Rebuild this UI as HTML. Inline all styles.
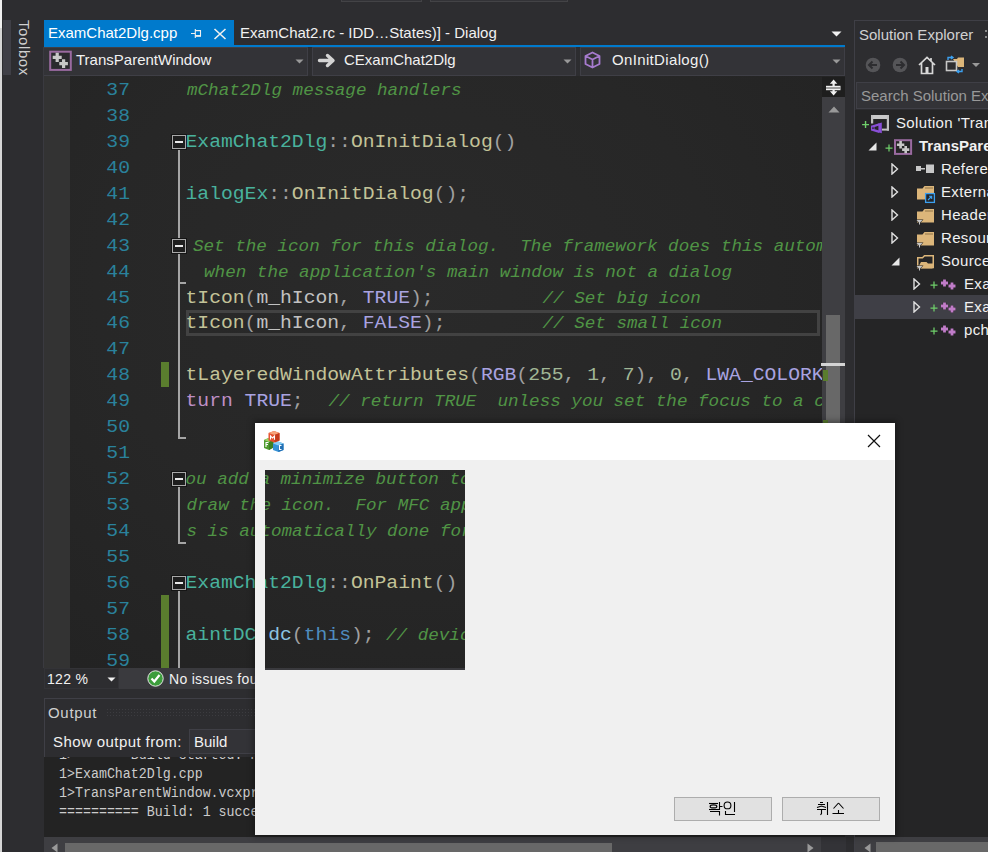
<!DOCTYPE html><html><head><meta charset="utf-8"><style>
*{margin:0;padding:0;box-sizing:border-box}
html,body{width:988px;height:852px;overflow:hidden;background:#2d2d30;position:relative;font-family:"Liberation Sans",sans-serif}
.a{position:absolute}
.cl{position:absolute;white-space:pre;font-family:"Liberation Mono",monospace;font-size:19.7px;line-height:26px;height:26px;transform-origin:0 18.2px;transform:scaleY(0.9)}
.ui{position:absolute;white-space:pre;font-family:"Liberation Sans",sans-serif;color:#f1f1f1}
</style></head><body>

<div class="a" style="left:0;top:0;width:2px;height:28px;background:#f0f0f0"></div>
<div class="a" style="left:0;top:28px;width:2px;height:824px;background:#d6d6d6"></div>
<div class="a" style="left:3px;top:20px;width:8px;height:55px;background:#3f3f46"></div>
<div class="ui" style="left:32px;top:20px;font-size:15px;line-height:16px;letter-spacing:0.6px;transform-origin:0 0;transform:rotate(90deg);color:#d0d0d0">Toolbox</div>
<div class="a" style="left:341px;top:-20px;width:81px;height:22px;background:#333337;border:1px solid #434346"></div>
<div class="a" style="left:430px;top:-20px;width:138px;height:22px;background:#333337;border:1px solid #434346"></div>
<div class="a" style="left:44px;top:20px;width:190px;height:25px;background:#007acc"></div>
<div class="ui" style="left:48px;top:24px;font-size:15px;line-height:18px;color:#fff">ExamChat2Dlg.cpp</div>
<svg class="a" style="left:190px;top:26px" width="13" height="14" viewBox="0 0 13 14">
<path d="M1 7.5H5M5.3 3V12M5.5 4.6H10.5V10M5.5 9.6H11" stroke="#f0f0f0" stroke-width="1.1" fill="none"/><path d="M5.5 10H11" stroke="#f0f0f0" stroke-width="1.6"/></svg>
<svg class="a" style="left:213px;top:28px" width="14" height="12" viewBox="0 0 14 12">
<path d="M1.5 1L12.5 11M12.5 1L1.5 11" stroke="#f0f0f0" stroke-width="1.6" fill="none"/></svg>
<div class="ui" style="left:240px;top:24px;font-size:15px;line-height:18px;color:#f1f1f1">ExamChat2.rc - IDD…States)] - Dialog</div>
<svg class="a" style="left:831px;top:31px" width="11" height="7" viewBox="0 0 11 7"><path d="M0.5 0.5H10.5L5.5 5.5Z" fill="#f1f1f1"/></svg>
<div class="a" style="left:44px;top:45px;width:801px;height:2px;background:#007acc"></div>
<div class="a" style="left:44px;top:47px;width:801px;height:29px;background:#2d2d30"></div>
<div class="a" style="left:43px;top:47px;width:265px;height:29px;background:#333337;border:1px solid #3f3f46"></div>
<div class="a" style="left:312px;top:47px;width:264px;height:29px;background:#333337;border:1px solid #3f3f46"></div>
<div class="a" style="left:580px;top:47px;width:265px;height:29px;background:#333337;border:1px solid #3f3f46"></div>
<svg class="a" style="left:295px;top:59px" width="9" height="6" viewBox="0 0 9 6"><path d="M0.5 0.5H8.5L4.5 4.5Z" fill="#999"/></svg>
<svg class="a" style="left:563px;top:59px" width="9" height="6" viewBox="0 0 9 6"><path d="M0.5 0.5H8.5L4.5 4.5Z" fill="#999"/></svg>
<svg class="a" style="left:832px;top:59px" width="9" height="6" viewBox="0 0 9 6"><path d="M0.5 0.5H8.5L4.5 4.5Z" fill="#999"/></svg>
<svg class="a" style="left:49px;top:50px" width="23" height="21" viewBox="0 0 23 21">
<rect x="1.2" y="1.7" width="20.6" height="18.2" fill="#2a2a2e" stroke="#9a6aa0" stroke-width="2"/>
<path d="M3.7 7.4H12.7M8.2 2.7V12.1M10.3 13.6H18.9M14.6 9.3V17.9" stroke="#c8c8c8" stroke-width="3.2"/></svg>
<div class="ui" style="left:76px;top:51px;font-size:15px;line-height:18px;color:#f1f1f1">TransParentWindow</div>
<svg class="a" style="left:317px;top:52px" width="21" height="17" viewBox="0 0 21 17">
<path d="M2.5 8.5H15.5M10.5 3.5L16 8.5L10.5 13.5" stroke="#d4d4d4" stroke-width="3.4" stroke-linecap="round" stroke-linejoin="round" fill="none"/></svg>
<div class="ui" style="left:344px;top:51px;font-size:15px;line-height:18px;color:#f1f1f1">CExamChat2Dlg</div>
<svg class="a" style="left:584px;top:51px" width="17" height="18" viewBox="0 0 17 18">
<path d="M8.5 1.5L15.5 5V13L8.5 16.5L1.5 13V5Z M1.5 5L8.5 8.5L15.5 5 M8.5 8.5V16.5" stroke="#a77bcf" stroke-width="1.8" stroke-linejoin="round" fill="none"/></svg>
<div class="ui" style="left:612px;top:51px;font-size:15px;line-height:18px;letter-spacing:0.35px;color:#f1f1f1">OnInitDialog()</div>
<div class="a" style="left:43px;top:47px;width:1px;height:621px;background:#3a3a40"></div>
<div class="a" style="left:44px;top:76px;width:801px;height:592px;background:radial-gradient(ellipse 70% 80% at 45% 35%, #2a2a2a 0%, #272727 55%, #232323 100%);overflow:hidden">
<div class="a" style="left:0;top:0;width:26px;height:592px;background:#333333"></div>
</div>
<div class="a" style="left:44px;top:76px;width:778px;height:592px;overflow:hidden">
<div class="cl" style="left:16px;width:70px;text-align:right;top:0.91px;color:#2a829c">37</div>
<div class="cl" style="left:16px;width:70px;text-align:right;top:26.86px;color:#2a829c">38</div>
<div class="cl" style="left:16px;width:70px;text-align:right;top:52.81px;color:#2a829c">39</div>
<div class="cl" style="left:16px;width:70px;text-align:right;top:78.76px;color:#2a829c">40</div>
<div class="cl" style="left:16px;width:70px;text-align:right;top:104.71px;color:#2a829c">41</div>
<div class="cl" style="left:16px;width:70px;text-align:right;top:130.66px;color:#2a829c">42</div>
<div class="cl" style="left:16px;width:70px;text-align:right;top:156.61px;color:#2a829c">43</div>
<div class="cl" style="left:16px;width:70px;text-align:right;top:182.56px;color:#2a829c">44</div>
<div class="cl" style="left:16px;width:70px;text-align:right;top:208.51px;color:#2a829c">45</div>
<div class="cl" style="left:16px;width:70px;text-align:right;top:234.46px;color:#2a829c">46</div>
<div class="cl" style="left:16px;width:70px;text-align:right;top:260.41px;color:#2a829c">47</div>
<div class="cl" style="left:16px;width:70px;text-align:right;top:286.36px;color:#2a829c">48</div>
<div class="cl" style="left:16px;width:70px;text-align:right;top:312.31px;color:#2a829c">49</div>
<div class="cl" style="left:16px;width:70px;text-align:right;top:338.26px;color:#2a829c">50</div>
<div class="cl" style="left:16px;width:70px;text-align:right;top:364.21px;color:#2a829c">51</div>
<div class="cl" style="left:16px;width:70px;text-align:right;top:390.16px;color:#2a829c">52</div>
<div class="cl" style="left:16px;width:70px;text-align:right;top:416.11px;color:#2a829c">53</div>
<div class="cl" style="left:16px;width:70px;text-align:right;top:442.06px;color:#2a829c">54</div>
<div class="cl" style="left:16px;width:70px;text-align:right;top:468.01px;color:#2a829c">55</div>
<div class="cl" style="left:16px;width:70px;text-align:right;top:493.96px;color:#2a829c">56</div>
<div class="cl" style="left:16px;width:70px;text-align:right;top:519.91px;color:#2a829c">57</div>
<div class="cl" style="left:16px;width:70px;text-align:right;top:545.86px;color:#2a829c">58</div>
<div class="cl" style="left:16px;width:70px;text-align:right;top:571.81px;color:#2a829c">59</div>
<div class="a" style="left:117px;top:286px;width:8px;height:25px;background:#5a7d2e"></div>
<div class="a" style="left:117px;top:519px;width:8px;height:80px;background:#5a7d2e"></div>
<div class="a" style="left:134px;top:73px;width:2px;height:290px;background:#a5a5a5"></div>
<div class="a" style="left:134px;top:361px;width:8px;height:2px;background:#a5a5a5"></div>
<div class="a" style="left:134px;top:175px;width:2px;height:33px;background:#a5a5a5"></div>
<div class="a" style="left:134px;top:206px;width:8px;height:2px;background:#a5a5a5"></div>
<div class="a" style="left:134px;top:396px;width:2px;height:72px;background:#a5a5a5"></div>
<div class="a" style="left:134px;top:466px;width:8px;height:2px;background:#a5a5a5"></div>
<div class="a" style="left:134px;top:513px;width:2px;height:111px;background:#a5a5a5"></div>
<div class="a" style="left:127px;top:58px;width:16px;height:16px;background:#151515"></div>
<div class="a" style="left:128px;top:59px;width:14px;height:14px;border:1.5px solid #a8a8a8;background:#1e1e1e"></div>
<div class="a" style="left:131px;top:65px;width:8px;height:2px;background:#e8e8e8"></div>
<div class="a" style="left:127px;top:162px;width:16px;height:16px;background:#151515"></div>
<div class="a" style="left:128px;top:163px;width:14px;height:14px;border:1.5px solid #a8a8a8;background:#1e1e1e"></div>
<div class="a" style="left:131px;top:169px;width:8px;height:2px;background:#e8e8e8"></div>
<div class="a" style="left:127px;top:395px;width:16px;height:16px;background:#151515"></div>
<div class="a" style="left:128px;top:396px;width:14px;height:14px;border:1.5px solid #a8a8a8;background:#1e1e1e"></div>
<div class="a" style="left:131px;top:402px;width:8px;height:2px;background:#e8e8e8"></div>
<div class="a" style="left:127px;top:499px;width:16px;height:16px;background:#151515"></div>
<div class="a" style="left:128px;top:500px;width:14px;height:14px;border:1.5px solid #a8a8a8;background:#1e1e1e"></div>
<div class="a" style="left:131px;top:506px;width:8px;height:2px;background:#e8e8e8"></div>
<div class="a" style="left:142px;top:234px;width:634px;height:26px;border:3px solid #424242"></div>
<div class="cl" style="left:143.00px;top:0.91px"><span style="color:#509445;font-style:italic;font-size:17.6px">mChat2Dlg message handlers</span></div>
<div class="cl" style="left:141.50px;top:52.81px"><span style="color:#49b29d">ExamChat2Dlg</span><span style="color:#a0a0a0">::</span><span style="color:#c3c398">OnInitDialog</span><span style="color:#a0a0a0">()</span></div>
<div class="cl" style="left:141.50px;top:104.71px"><span style="color:#49b29d">ialogEx</span><span style="color:#a0a0a0">::</span><span style="color:#c3c398">OnInitDialog</span><span style="color:#a0a0a0">();</span></div>
<div class="cl" style="left:149.00px;top:156.61px"><span style="color:#509445;font-style:italic;font-size:17.6px">Set the icon for this dialog.  The framework does this automatically</span></div>
<div class="cl" style="left:149.50px;top:182.56px"><span style="color:#509445;font-style:italic;font-size:17.6px"> when the application&#x27;s main window is not a dialog</span></div>
<div class="cl" style="left:141.50px;top:208.51px"><span style="color:#c3c398">tIcon</span><span style="color:#a0a0a0">(</span><span style="color:#c1c1c1">m_hIcon</span><span style="color:#a0a0a0">, </span><span style="color:#a9a3e1">TRUE</span><span style="color:#a0a0a0">);</span></div>
<div class="cl" style="left:498.50px;top:208.51px"><span style="color:#509445;font-style:italic;font-size:17.6px">// Set big icon</span></div>
<div class="cl" style="left:141.50px;top:234.46px"><span style="color:#c3c398">tIcon</span><span style="color:#a0a0a0">(</span><span style="color:#c1c1c1">m_hIcon</span><span style="color:#a0a0a0">, </span><span style="color:#a9a3e1">FALSE</span><span style="color:#a0a0a0">);</span></div>
<div class="cl" style="left:498.50px;top:234.46px"><span style="color:#509445;font-style:italic;font-size:17.6px">// Set small icon</span></div>
<div class="cl" style="left:141.50px;top:286.36px"><span style="color:#c3c398">tLayeredWindowAttributes</span><span style="color:#a0a0a0">(</span><span style="color:#a9a3e1">RGB</span><span style="color:#a0a0a0">(</span><span style="color:#a1b796">255</span><span style="color:#a0a0a0">, </span><span style="color:#a1b796">1</span><span style="color:#a0a0a0">, </span><span style="color:#a1b796">7</span><span style="color:#a0a0a0">), </span><span style="color:#a1b796">0</span><span style="color:#a0a0a0">, </span><span style="color:#a9a3e1">LWA_COLORKEY</span><span style="color:#a0a0a0">);</span></div>
<div class="cl" style="left:141.50px;top:312.31px"><span style="color:#bf8fc5">turn</span><span style="color:#c3c3c3"> </span><span style="color:#a9a3e1">TRUE</span><span style="color:#a0a0a0">;</span></div>
<div class="cl" style="left:284.50px;top:312.31px"><span style="color:#509445;font-style:italic;font-size:17.6px">// return TRUE  unless you set the focus to a control</span></div>
<div class="cl" style="left:141.50px;top:390.16px"><span style="color:#509445;font-style:italic;font-size:17.6px">ou add a minimize button to your dialog, you will need the code below</span></div>
<div class="cl" style="left:142.50px;top:416.11px"><span style="color:#509445;font-style:italic;font-size:17.6px">draw the icon.  For MFC applications using the document/view model,</span></div>
<div class="cl" style="left:142.50px;top:442.06px"><span style="color:#509445;font-style:italic;font-size:17.6px">s is automatically done for you by the framework.</span></div>
<div class="cl" style="left:141.50px;top:493.96px"><span style="color:#49b29d">ExamChat2Dlg</span><span style="color:#a0a0a0">::</span><span style="color:#c3c398">OnPaint</span><span style="color:#a0a0a0">()</span></div>
<div class="cl" style="left:141.50px;top:545.86px"><span style="color:#49b29d">aintDC</span><span style="color:#c3c3c3"> </span><span style="color:#8cc3e0">dc</span><span style="color:#a0a0a0">(</span><span style="color:#4f8cbe">this</span><span style="color:#a0a0a0">);</span><span style="color:#c3c3c3"> </span></div>
<div class="cl" style="left:342.00px;top:545.86px"><span style="color:#509445;font-style:italic;font-size:17.6px">// device context for painting</span></div>
</div>
<div class="a" style="left:822px;top:77px;width:23px;height:591px;background:#3e3e42"></div>
<div class="a" style="left:822px;top:77px;width:23px;height:20px;background:#1e1e1e"></div>
<svg class="a" style="left:822px;top:77px" width="23" height="20" viewBox="0 0 23 20">
<rect x="10.5" y="4" width="2.2" height="13" fill="#f0f0f0"/>
<path d="M11.6 2.5L15.3 6.8H7.9Z M11.6 18.5L15.3 14.2H7.9Z" fill="#f0f0f0"/>
<rect x="4" y="8.8" width="14.5" height="4.4" fill="#f0f0f0"/><rect x="4" y="10.3" width="14.5" height="1.4" fill="#7a7a7a"/></svg>
<svg class="a" style="left:828px;top:105px" width="12" height="8" viewBox="0 0 12 8"><path d="M0.5 7.5H11.5L6 1.5Z" fill="#999"/></svg>
<div class="a" style="left:826px;top:315px;width:14px;height:353px;background:#686868"></div>
<div class="a" style="left:821px;top:363px;width:24px;height:3px;background:#d4d4d4"></div>
<div class="a" style="left:823px;top:370px;width:5px;height:11px;background:#5a7d2e"></div>
<div class="a" style="left:823px;top:420px;width:5px;height:4px;background:#5a7d2e"></div>
<div class="a" style="left:44px;top:668px;width:801px;height:21px;background:#3a3a3e"></div>
<div class="a" style="left:44px;top:668px;width:75px;height:21px;border:1px solid #333337;background:#2d2d30"></div>
<div class="ui" style="left:47px;top:670px;font-size:14px;line-height:19px;letter-spacing:0.3px;color:#f1f1f1">122 %</div>
<svg class="a" style="left:107px;top:677px" width="9" height="6" viewBox="0 0 9 6"><path d="M0.5 0.5H8.5L4.5 4.5Z" fill="#f1f1f1"/></svg>
<svg class="a" style="left:147px;top:670px" width="17" height="17" viewBox="0 0 17 17">
<circle cx="8.5" cy="8.5" r="7.7" fill="#3c9d3c" stroke="#e6e6e6" stroke-width="1"/>
<path d="M4.5 8.5L7.3 11.5L12.5 5" stroke="#fff" stroke-width="2.2" fill="none"/></svg>
<div class="ui" style="left:169px;top:670px;font-size:14px;line-height:19px;letter-spacing:0.3px;color:#f1f1f1">No issues found</div>
<div class="a" style="left:44px;top:698px;width:801px;height:154px;background:#2d2d30;border:1px solid #3f3f46;border-bottom:none"></div>
<div class="ui" style="left:48px;top:704px;font-size:15px;line-height:18px;letter-spacing:0.7px;color:#d0d0d0">Output</div>
<div class="a" style="left:106px;top:708px;width:739px;height:8px;background-image:radial-gradient(#3c3c40 0.8px, transparent 0.9px);background-size:3px 3px"></div>
<div class="ui" style="left:53px;top:733px;font-size:15px;line-height:18px;letter-spacing:0.42px;color:#f1f1f1">Show output from:</div>
<div class="a" style="left:189px;top:729px;width:300px;height:25px;background:#333337;border:1px solid #3f3f46"></div>
<div class="ui" style="left:194px;top:733px;font-size:15px;line-height:18px;color:#f1f1f1">Build</div>
<div class="a" style="left:44px;top:757px;width:801px;height:80px;background:#232323;overflow:hidden">
<div class="a" style="left:15px;top:-12px;white-space:pre;font-family:Liberation Mono,monospace;font-size:13.3px;line-height:19px;color:#cccccc;transform:scaleY(1.15);transform-origin:0 50%">1&gt;------ Build started: Project: TransParentWindow, Configuration: Debug Win32 ------</div>
<div class="a" style="left:15px;top:7px;white-space:pre;font-family:Liberation Mono,monospace;font-size:13.3px;line-height:19px;color:#cccccc;transform:scaleY(1.15);transform-origin:0 50%">1&gt;ExamChat2Dlg.cpp</div>
<div class="a" style="left:15px;top:26px;white-space:pre;font-family:Liberation Mono,monospace;font-size:13.3px;line-height:19px;color:#cccccc;transform:scaleY(1.15);transform-origin:0 50%">1&gt;TransParentWindow.vcxproj -&gt; C:\TransParentWindow.exe</div>
<div class="a" style="left:15px;top:45px;white-space:pre;font-family:Liberation Mono,monospace;font-size:13.3px;line-height:19px;color:#cccccc;transform:scaleY(1.15);transform-origin:0 50%">========== Build: 1 succeeded, 0 failed, 0 up-to-date, 0 skipped ==========</div>
</div>
<div class="a" style="left:44px;top:837px;width:777px;height:15px;background:#3e3e42"></div>
<div class="a" style="left:821px;top:837px;width:25px;height:15px;background:#333337"></div>
<svg class="a" style="left:50px;top:843px" width="8" height="10" viewBox="0 0 8 10"><path d="M7.5 0.5V9.5L1.5 5Z" fill="#999"/></svg>
<div class="a" style="left:65px;top:843px;width:547px;height:9px;background:#686868"></div>
<svg class="a" style="left:807px;top:843px" width="8" height="10" viewBox="0 0 8 10"><path d="M0.5 0.5V9.5L6.5 5Z" fill="#999"/></svg>
<div class="a" style="left:854px;top:20px;width:134px;height:832px;background:#2d2d30;border-left:1px solid #3f3f46;border-top:1px solid #3f3f46"></div>
<div class="ui" style="left:859px;top:26px;font-size:15px;line-height:18px;color:#d0d0d0">Solution Explorer</div>
<div class="a" style="left:985px;top:30px;width:2px;height:2px;background:#888"></div><div class="a" style="left:985px;top:36px;width:2px;height:2px;background:#888"></div>
<svg class="a" style="left:865px;top:57px" width="16" height="16" viewBox="0 0 16 16">
<circle cx="8" cy="8" r="7.3" fill="#555558"/><path d="M12 8H4.5M7.5 4.5L4 8L7.5 11.5" stroke="#2d2d30" stroke-width="2" fill="none"/></svg>
<svg class="a" style="left:892px;top:57px" width="16" height="16" viewBox="0 0 16 16">
<circle cx="8" cy="8" r="7.3" fill="#555558"/><path d="M4 8H11.5M8.5 4.5L12 8L8.5 11.5" stroke="#2d2d30" stroke-width="2" fill="none"/></svg>
<svg class="a" style="left:917px;top:55px" width="20" height="20" viewBox="0 0 20 20">
<path d="M2 10L10 2.5L18 10M4.5 8V18.5H15.5V8M14 3V6.5" stroke="#d8d8d8" stroke-width="1.7" fill="none"/><rect x="8.5" y="12" width="3" height="6.5" fill="#d8d8d8"/></svg>
<svg class="a" style="left:945px;top:54px" width="21" height="20" viewBox="0 0 21 20">
<path d="M8 5H12L13 3.5H19V13H13" fill="#dcb67a"/><path d="M9 5.5H18.5V12.5" fill="#dcb67a"/>
<rect x="1.5" y="7.5" width="10" height="9" fill="#2d2d30" stroke="#c8c8c8" stroke-width="1.6"/>
<path d="M3 6V3.5H7M6 2L8 3.5L6 5M17 15V17.5H13M14 16L12 17.5L14 19" stroke="#3ca0ef" stroke-width="1.4" fill="none"/></svg>
<svg class="a" style="left:972px;top:63px" width="8" height="5" viewBox="0 0 8 5"><path d="M0 0H8L4 4Z" fill="#999"/></svg>
<div class="a" style="left:856px;top:82px;width:140px;height:27px;background:#333337;border:1px solid #3f3f46"></div>
<div class="ui" style="left:861px;top:87px;font-size:15px;line-height:18px;color:#999">Search Solution Explorer</div>
<div class="a" style="left:855px;top:110px;width:133px;height:727px;background:#252526"></div>
<div class="a" style="left:855px;top:295px;width:133px;height:24px;background:#3f3f46"></div>
<svg class="a" style="left:858px;top:112px" width="34" height="24" viewBox="0 0 34 24">
<path d="M4.1 12.6H11M7.55 9.1V16" stroke="#6fcf6a" stroke-width="1.4"/>
<rect x="13" y="3" width="18" height="4" fill="#c8c8c8"/><rect x="13" y="3" width="2.2" height="8.5" fill="#c0c0c0"/>
<rect x="28.8" y="3" width="2.2" height="15.6" fill="#c0c0c0"/><rect x="24" y="16.6" width="7" height="2" fill="#c0c0c0"/>
<path d="M20.4 11.6L23.8 10.6V21.2L20.4 20.2Z" fill="#8a4fd8"/>
<path d="M14.2 14.6L21.5 12.3M14.2 17.6L21.5 19.9" stroke="#8a4fd8" stroke-width="2.2"/>
<path d="M13 13.2L17.2 16.1L13 19Z" fill="#8a4fd8"/><circle cx="15" cy="16.1" r="0.9" fill="#252526"/></svg>
<div class="ui" style="left:896px;top:114px;font-size:15px;line-height:18px;color:#f1f1f1;letter-spacing:0.35px;">Solution &#x27;TransParentWindow&#x27;</div>
<svg class="a" style="left:868px;top:142px" width="9" height="9" viewBox="0 0 9 9"><path d="M8.5 0.5V8.5H0.5Z" fill="#e8e8e8"/></svg>
<svg class="a" style="left:884.6px;top:143.6px" width="8" height="8" viewBox="0 0 8 8"><path d="M0.5 4H7.5M4 0.5V7.5" stroke="#6fcf6a" stroke-width="1.25"/></svg>
<svg class="a" style="left:893px;top:138px" width="21" height="19" viewBox="0 0 21 19">
<rect x="2" y="2.2" width="16.1" height="13.7" fill="#252526" stroke="#9a6aa0" stroke-width="2"/>
<path d="M3.9 6.7H11.3M7.6 3V10.4M9.1 11.6H16.3M12.7 8V15.2" stroke="#c8c8c8" stroke-width="2.6"/></svg>
<div class="ui" style="left:919px;top:137px;font-size:15px;line-height:18px;color:#f1f1f1;font-weight:bold;">TransParentWindow</div>
<svg class="a" style="left:891px;top:163px" width="8" height="12" viewBox="0 0 8 12"><path d="M1 1V11L6.5 6Z" fill="none" stroke="#e0e0e0" stroke-width="1.4"/></svg>
<svg class="a" style="left:915px;top:164px" width="20" height="10" viewBox="0 0 20 10">
<rect x="1" y="2" width="5" height="5" fill="#c8c8c8"/><rect x="6" y="4" width="4" height="1.5" fill="#c8c8c8"/><rect x="11" y="0.5" width="8" height="8.5" fill="#c8c8c8"/></svg>
<div class="ui" style="left:941px;top:160px;font-size:15px;line-height:18px;color:#f1f1f1;letter-spacing:0.35px;">References</div>
<svg class="a" style="left:891px;top:186px" width="8" height="12" viewBox="0 0 8 12"><path d="M1 1V11L6.5 6Z" fill="none" stroke="#e0e0e0" stroke-width="1.4"/></svg>
<svg class="a" style="left:916px;top:183px;overflow:visible" width="20" height="20" viewBox="0 0 20 20"><path d="M1 5.5H6.5L8.5 3H18V16.5H1Z" fill="#dcb67a"/><path d="M9 5H17" stroke="#8f7448" stroke-width="1"/><rect x="9.6" y="10.6" width="8.8" height="8.8" fill="#252526" stroke="#3ca0ef" stroke-width="1.3"/><path d="M12 17L15.5 13.5M13 13.3H15.7V16" stroke="#3ca0ef" stroke-width="1.1" fill="none"/></svg>
<div class="ui" style="left:941px;top:183px;font-size:15px;line-height:18px;color:#f1f1f1;letter-spacing:0.35px;">External Dependencies</div>
<svg class="a" style="left:891px;top:209px" width="8" height="12" viewBox="0 0 8 12"><path d="M1 1V11L6.5 6Z" fill="none" stroke="#e0e0e0" stroke-width="1.4"/></svg>
<svg class="a" style="left:916px;top:206px;overflow:visible" width="20" height="20" viewBox="0 0 20 20"><path d="M1 5.5H6.5L8.5 3H18V16.5H1Z" fill="#dcb67a"/><path d="M9 5H17" stroke="#8f7448" stroke-width="1"/><path d="M-0.5 13.5H7.5L4.2 17V19.5H2.8V17Z" fill="#252526"/><path d="M0.5 14H6.5L4 16.6V18.5H3V16.6Z" fill="#c8c8c8"/></svg>
<div class="ui" style="left:941px;top:206px;font-size:15px;line-height:18px;color:#f1f1f1;letter-spacing:0.35px;">Header Files</div>
<svg class="a" style="left:891px;top:232px" width="8" height="12" viewBox="0 0 8 12"><path d="M1 1V11L6.5 6Z" fill="none" stroke="#e0e0e0" stroke-width="1.4"/></svg>
<svg class="a" style="left:916px;top:229px;overflow:visible" width="20" height="20" viewBox="0 0 20 20"><path d="M1 5.5H6.5L8.5 3H18V16.5H1Z" fill="#dcb67a"/><path d="M9 5H17" stroke="#8f7448" stroke-width="1"/><path d="M-0.5 13.5H7.5L4.2 17V19.5H2.8V17Z" fill="#252526"/><path d="M0.5 14H6.5L4 16.6V18.5H3V16.6Z" fill="#c8c8c8"/></svg>
<div class="ui" style="left:941px;top:229px;font-size:15px;line-height:18px;color:#f1f1f1;letter-spacing:0.35px;">Resource Files</div>
<svg class="a" style="left:891px;top:257px" width="9" height="9" viewBox="0 0 9 9"><path d="M8.5 0.5V8.5H0.5Z" fill="#e8e8e8"/></svg>
<svg class="a" style="left:916px;top:252px;overflow:visible" width="20" height="20" viewBox="0 0 20 20"><path d="M1.75 15.5V5.75H6.5L8.5 3.75H17.25V15.5Z" fill="#252526" stroke="#dcb67a" stroke-width="1.5"/><path d="M5 10H10.5L12 11.5H17.5L16.5 16.5H1.5Z" fill="#dcb67a"/><path d="M-0.5 13.5H7.5L4.2 17V19.5H2.8V17Z" fill="#252526"/><path d="M0.5 14H6.5L4 16.6V18.5H3V16.6Z" fill="#c8c8c8"/></svg>
<div class="ui" style="left:941px;top:252px;font-size:15px;line-height:18px;color:#f1f1f1;letter-spacing:0.35px;">Source Files</div>
<svg class="a" style="left:913px;top:278px" width="8" height="12" viewBox="0 0 8 12"><path d="M1 1V11L6.5 6Z" fill="none" stroke="#e0e0e0" stroke-width="1.4"/></svg>
<svg class="a" style="left:930px;top:281px" width="8" height="8" viewBox="0 0 8 8"><path d="M0.5 4H7.5M4 0.5V7.5" stroke="#6fcf6a" stroke-width="1.25"/></svg>
<svg class="a" style="left:940px;top:279px" width="17" height="12" viewBox="0 0 17 12">
<path d="M1 4H8M4.5 0.5V7.5M8.5 7H15.5M12 3.5V10.5" stroke="#1a1a1a" stroke-width="3.4"/>
<path d="M1 4H8M4.5 0.5V7.5M8.5 7H15.5M12 3.5V10.5" stroke="#c07cc8" stroke-width="2.8"/></svg>
<div class="ui" style="left:964px;top:275px;font-size:15px;line-height:18px;color:#f1f1f1;letter-spacing:0.35px;">ExamChat2.cpp</div>
<svg class="a" style="left:913px;top:301px" width="8" height="12" viewBox="0 0 8 12"><path d="M1 1V11L6.5 6Z" fill="none" stroke="#e0e0e0" stroke-width="1.4"/></svg>
<svg class="a" style="left:930px;top:304px" width="8" height="8" viewBox="0 0 8 8"><path d="M0.5 4H7.5M4 0.5V7.5" stroke="#6fcf6a" stroke-width="1.25"/></svg>
<svg class="a" style="left:940px;top:302px" width="17" height="12" viewBox="0 0 17 12">
<path d="M1 4H8M4.5 0.5V7.5M8.5 7H15.5M12 3.5V10.5" stroke="#1a1a1a" stroke-width="3.4"/>
<path d="M1 4H8M4.5 0.5V7.5M8.5 7H15.5M12 3.5V10.5" stroke="#c07cc8" stroke-width="2.8"/></svg>
<div class="ui" style="left:964px;top:298px;font-size:15px;line-height:18px;color:#f1f1f1;letter-spacing:0.35px;">ExamChat2Dlg.cpp</div>
<svg class="a" style="left:930px;top:327px" width="8" height="8" viewBox="0 0 8 8"><path d="M0.5 4H7.5M4 0.5V7.5" stroke="#6fcf6a" stroke-width="1.25"/></svg>
<svg class="a" style="left:940px;top:325px" width="17" height="12" viewBox="0 0 17 12">
<path d="M1 4H8M4.5 0.5V7.5M8.5 7H15.5M12 3.5V10.5" stroke="#1a1a1a" stroke-width="3.4"/>
<path d="M1 4H8M4.5 0.5V7.5M8.5 7H15.5M12 3.5V10.5" stroke="#c07cc8" stroke-width="2.8"/></svg>
<div class="ui" style="left:964px;top:321px;font-size:15px;line-height:18px;color:#f1f1f1;letter-spacing:0.35px;">pch.cpp</div>
<div class="a" style="left:855px;top:837px;width:133px;height:15px;background:#3e3e42"></div>
<svg class="a" style="left:863px;top:843px" width="8" height="10" viewBox="0 0 8 10"><path d="M7.5 0.5V9.5L1.5 5Z" fill="#999"/></svg>
<div class="a" style="left:876px;top:842px;width:112px;height:10px;background:#686868"></div>
<div class="a" style="left:255px;top:423px;width:640px;height:412px;box-shadow:0 0 6px 2px rgba(0,0,0,0.35)"></div>
<div class="a" style="left:255px;top:423px;width:640px;height:37px;background:#ffffff"></div>
<div class="a" style="left:255px;top:460px;width:10px;height:375px;background:#f0f0f0"></div>
<div class="a" style="left:265px;top:460px;width:630px;height:10px;background:#f0f0f0"></div>
<div class="a" style="left:465px;top:470px;width:430px;height:200px;background:#f0f0f0"></div>
<div class="a" style="left:265px;top:670px;width:630px;height:165px;background:#f0f0f0"></div>
<div class="a" style="left:894px;top:460px;width:1px;height:375px;background:#fafafa"></div>
<svg class="a" style="left:867px;top:434px" width="14" height="14" viewBox="0 0 14 14">
<path d="M1 1L13 13M13 1L1 13" stroke="#111" stroke-width="1.2"/></svg>
<svg class="a" style="left:263px;top:430px" width="22" height="23" viewBox="0 0 22 23">
<path d="M1 10L5.5 8L10.5 10V17.5L6 20L1 18Z" fill="#4f9a2e"/><path d="M1 10L5.5 8L10.5 10L6 12Z" fill="#9bd36a"/><path d="M6 12V20L10.5 17.5V10Z" fill="#3d7f22"/>
<path d="M10 13.5L15 11.5L20.5 13.5V20L15.5 22L10 20Z" fill="#3592d6"/><path d="M10 13.5L15 11.5L20.5 13.5L15.5 15.5Z" fill="#8acff5"/><path d="M15.5 15.5V22L20.5 20V13.5Z" fill="#2370b4"/>
<path d="M5.5 3L11 1L16.5 3V10.5L11.5 12.5L5.5 10.5Z" fill="#e5502e"/><path d="M5.5 3L11 1L16.5 3L11.5 5Z" fill="#f7a37a"/><path d="M11.5 5V12.5L16.5 10.5V3Z" fill="#c43a1c"/>
<path d="M7.5 9.5V5.8L9.5 8L11.5 6V9.8" stroke="#fff" stroke-width="1.1" fill="none"/>
<path d="M3 17V12.5H5.5M3 14.5H5" stroke="#fff" stroke-width="1.1" fill="none"/>
<path d="M18.5 15.5H16.5V19.5H18.5" stroke="#fff" stroke-width="1.1" fill="none"/></svg>
<div class="a" style="left:674px;top:797px;width:98px;height:24px;background:#e1e1e1;border:1px solid #adadad"></div>
<div class="a" style="left:782px;top:797px;width:98px;height:24px;background:#e1e1e1;border:1px solid #adadad"></div>
<svg class="a" style="left:700px;top:795px" width="50" height="27" viewBox="0 0 50 27">
<g stroke="#000" stroke-width="1.1" fill="none">
<path d="M9 8.5H18"/>
<ellipse cx="13.5" cy="11.4" rx="3.4" ry="1.5"/>
<path d="M9 14.5H19.5"/>
<path d="M19.5 7V15M19.5 11.5H22.5"/>
<path d="M10 16.5H19.5V20.5"/>
<ellipse cx="27.5" cy="10.4" rx="3.4" ry="3.4"/>
<path d="M34.5 7V17"/>
<path d="M25.5 16V19.5H35"/>
</g></svg>
<svg class="a" style="left:805px;top:795px" width="50" height="27" viewBox="0 0 50 27">
<g stroke="#000" stroke-width="1.1" fill="none">
<path d="M15 7.5H18M13 9.5H20"/>
<path d="M12 12.5L16.5 11L21 12.5"/>
<path d="M12 14.5H21M16.5 14.5V18.5L15.5 19.8"/>
<path d="M22.5 7V20"/>
<path d="M33.5 8L28.5 13.5M33.5 8L38.5 13.5M33.5 15V18.5M27.5 18.5H39"/>
</g></svg>
</body></html>
